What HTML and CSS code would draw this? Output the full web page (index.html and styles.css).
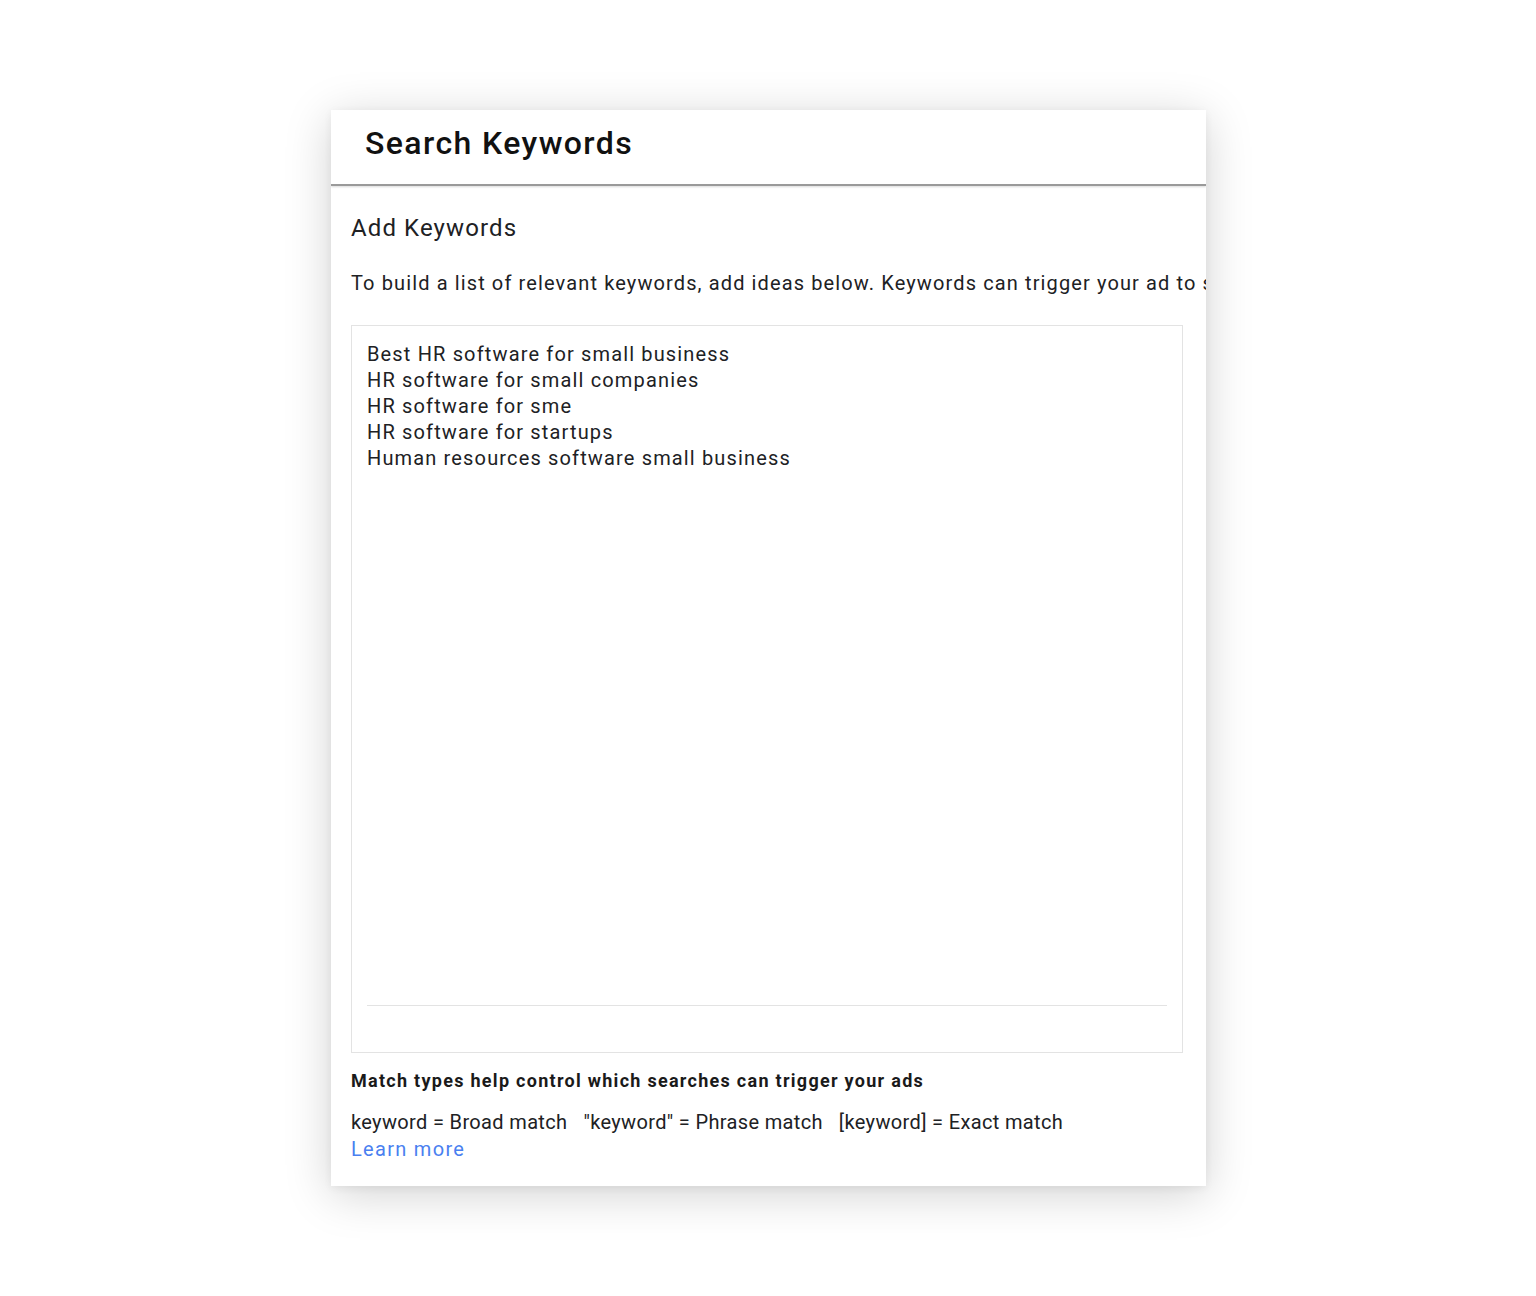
FILE: index.html
```html
<!DOCTYPE html>
<html lang="en">
<head>
<meta charset="utf-8">
<title>Search Keywords</title>
<link rel="stylesheet" href="styles.css">
</head>
<body>
<div class="card">
  <header class="card-header">
    <h1 class="title">Search Keywords</h1>
  </header>
  <section class="card-body">
    <h2 class="subtitle">Add Keywords</h2>
    <p class="desc">To build a list of relevant keywords, add ideas below. Keywords can trigger your ad to show when people search for them.</p>
    <div class="kw-box">
      <div class="kw-list">
        <div>Best HR software for small business</div>
        <div>HR software for small companies</div>
        <div>HR software for sme</div>
        <div>HR software for startups</div>
        <div>Human resources software small business</div>
      </div>
      <div class="kw-rule"></div>
    </div>
    <p class="match-title">Match types help control which searches can trigger your ads</p>
    <p class="match-line">keyword = Broad match&nbsp;&nbsp; "keyword" = Phrase match&nbsp;&nbsp; [keyword] = Exact match</p>
    <a class="learn" href="#">Learn more</a>
  </section>
</div>
</body>
</html>
```

FILE: styles.css
```css
html, body {
  margin: 0;
  padding: 0;
  background: #ffffff;
}
body {
  font-family: Roboto, "Liberation Sans", Arial, sans-serif;
  color: #202124;
  padding-top: 110px;
  padding-left: 331px;
  min-height: 1296px;
  box-sizing: border-box;
}
.card {
  width: 875px;
  height: 1076px;
  background: #ffffff;
  box-shadow: 0 8px 44px rgba(0, 0, 0, 0.18), 0 2px 8px rgba(0, 0, 0, 0.06);
  overflow: hidden;
  display: flex;
  flex-direction: column;
}
.card-header {
  height: 74px;
  border-bottom: 2px solid #9a9a9a;
  box-shadow: 0 1px 2px rgba(0, 0, 0, 0.15);
  padding-left: 34px;
  display: flex;
  align-items: center;
  flex-shrink: 0;
}
.title {
  margin: 0;
  font-size: 32px;
  font-weight: 500;
  line-height: 40px;
  letter-spacing: 1.4px;
  color: #111111;
  margin-top: -8px;
}
.card-body {
  padding: 26px 0 0 20px;
  display: flex;
  flex-direction: column;
  align-items: flex-start;
}
.subtitle {
  margin: 0;
  font-size: 24px;
  font-weight: 400;
  line-height: 32px;
  letter-spacing: 1.1px;
  color: #202124;
}
.desc {
  margin: 25px 0 0 0;
  font-size: 20px;
  line-height: 28px;
  letter-spacing: 1.12px;
  white-space: nowrap;
  color: #202124;
}
.kw-box {
  margin-top: 28px;
  width: 832px;
  height: 728px;
  border: 1px solid #e3e3e3;
  display: flex;
  flex-direction: column;
  padding: 15px 15px 0 15px;
  box-sizing: border-box;
}
.kw-list {
  font-size: 20px;
  line-height: 26px;
  letter-spacing: 1.15px;
  color: #202124;
  flex: 1;
}
.kw-rule {
  height: 1px;
  background: #e3e3e3;
  margin-bottom: 46px;
}
.match-title {
  margin: 16px 0 0 0;
  font-size: 18px;
  font-weight: 700;
  line-height: 24px;
  letter-spacing: 1.28px;
  color: #1a1a1a;
}
.match-line {
  margin: 16px 0 0 0;
  font-size: 20px;
  line-height: 27px;
  letter-spacing: 0.35px;
  white-space: nowrap;
  color: #202124;
}
.learn {
  font-size: 20px;
  line-height: 27px;
  letter-spacing: 1.3px;
  color: #4a7ff0;
  text-decoration: none;
}
```
